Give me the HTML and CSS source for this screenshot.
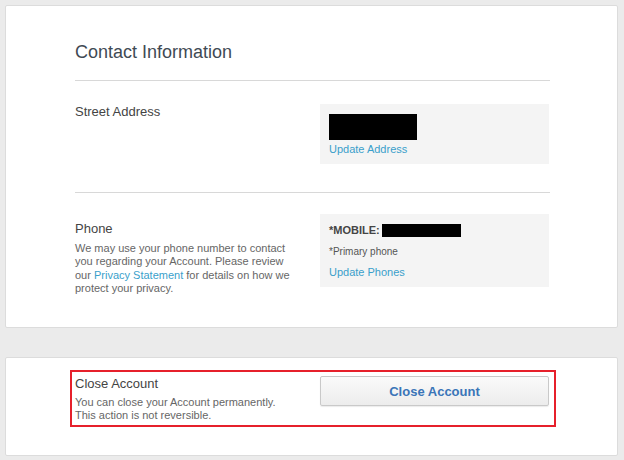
FILE: index.html
```html
<!DOCTYPE html>
<html>
<head>
<meta charset="utf-8">
<link rel="stylesheet" href="styles.css">
</head>
<body>
<div class="page">
  <section class="card contact">
    <div class="inner">
      <h1 class="title">Contact Information</h1>
      <div class="row address-row">
        <div class="label-col">
          <h2 class="label">Street Address</h2>
        </div>
        <div class="info-box address-box">
          <div class="redact redact-addr"></div>
          <a class="link" href="#">Update Address</a>
        </div>
      </div>
      <div class="row phone-row">
        <div class="label-col">
          <h2 class="label">Phone</h2>
          <p class="desc phone-desc">We may use your phone number to contact you regarding your Account. Please review our <a class="link" href="#">Privacy Statement</a> for details on how we protect your privacy.</p>
        </div>
        <div class="info-box phone-box">
          <div class="mobile"><span class="mobile-label">*MOBILE:</span><span class="redact redact-phone"></span></div>
          <div class="primary">*Primary phone</div>
          <a class="link" href="#">Update Phones</a>
        </div>
      </div>
    </div>
  </section>
  <section class="card close">
    <div class="close-box">
      <div class="label-col">
        <h2 class="label">Close Account</h2>
        <p class="desc">You can close your Account permanently.<br>This action is not reversible.</p>
      </div>
      <div class="btn-col">
        <button class="btn">Close Account</button>
      </div>
    </div>
  </section>
</div>
</body>
</html>
```

FILE: styles.css
```css
* { box-sizing: border-box; }
html, body { margin: 0; padding: 0; }
body {
  background: #ebebeb;
  font-family: "Liberation Sans", Arial, sans-serif;
  color: #555;
  width: 624px;
  height: 460px;
  overflow: hidden;
}
.page {
  padding: 5px 6px 0 5px;
  display: flex;
  flex-direction: column;
  gap: 29px;
}
.card {
  background: #fff;
  border: 1px solid #dcdcdc;
  border-radius: 2px;
}
.contact { height: 323px; }
.inner {
  padding: 0 67px 0 69px;
}
.title {
  margin: 0;
  padding-top: 35px;
  padding-bottom: 17px;
  font-size: 18px;
  font-weight: normal;
  line-height: 22px;
  color: #3f4a54;
  border-bottom: 1px solid #d8d8d8;
}
.row {
  display: grid;
  grid-template-columns: 245px 229px;
}
.address-row {
  padding: 23px 0 28px;
  border-bottom: 1px solid #d8d8d8;
}
.phone-row {
  padding: 21px 0 0;
}
.label {
  margin: 0;
  font-size: 13px;
  font-weight: normal;
  line-height: 16px;
  color: #444;
}
.address-row .label { margin-top: 0; }
.phone-row .label { margin-top: 7px; }
.desc {
  margin: 4px 0 0;
  font-size: 11px;
  line-height: 13.4px;
  color: #666;
}
.phone-desc {
  margin-top: 5px;
  width: 216px;
}
.link {
  color: #3a9fcb;
  text-decoration: none;
}
.info-box {
  background: #f4f4f4;
}
.address-box {
  height: 60px;
  padding: 10px 9px;
  font-size: 11px;
  line-height: 14px;
}
.redact {
  background: #000;
  display: block;
}
.redact-addr {
  width: 88px;
  height: 26px;
}
.address-box .link { display: block; margin-top: 2px; }
.phone-box {
  height: 73px;
  padding: 10px 9px 0;
  font-size: 11px;
}
.mobile {
  display: flex;
  align-items: center;
  height: 13px;
  line-height: 13px;
}
.mobile-label {
  font-weight: bold;
  color: #444;
  margin-right: 2px;
}
.redact-phone {
  width: 79px;
  height: 13px;
}
.primary {
  margin-top: 9px;
  font-size: 10px;
  line-height: 12px;
  color: #555;
}
.phone-box .link { display: block; margin-top: 8px; line-height: 13px; }
.close {
  height: 99px;
  padding: 12px 0 0 64px;
}
.close-box {
  width: 486px;
  height: 57px;
  border: 2px solid #e6202b;
  display: grid;
  grid-template-columns: 245px 229px;
  padding: 4px 0 0 3px;
}
.close-box .label { margin-top: 0; }
.close-box .desc { margin-top: 4px; line-height: 12.7px; }
.btn {
  width: 229px;
  height: 30px;
  margin-top: 0;
  border: 1px solid #c9c9c9;
  border-radius: 2px;
  background: linear-gradient(#fafafa, #ececec);
  font-family: "Liberation Sans", Arial, sans-serif;
  font-size: 13px;
  font-weight: bold;
  color: #3a75b8;
  box-shadow: 0 1px 1px rgba(0,0,0,0.08);
  padding: 0;
}
```
